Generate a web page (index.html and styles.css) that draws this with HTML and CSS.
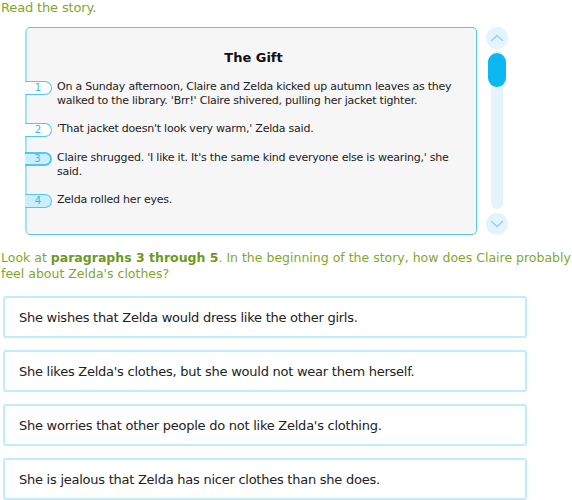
FILE: index.html
```html
<!DOCTYPE html>
<html>
<head>
<meta charset="utf-8">
<link rel="stylesheet" href="styles.css">
</head>
<body>
<div class="page">
  <div class="instr">Read the story.</div>
  <div class="story-row">
    <div class="story">
      <h1 class="title">The Gift</h1>
      <div class="para"><span class="num">1</span><p>On a Sunday afternoon, Claire and Zelda kicked up autumn leaves as they walked to the library. 'Brr!' Claire shivered, pulling her jacket tighter.</p></div>
      <div class="para"><span class="num">2</span><p>'That jacket doesn't look very warm,' Zelda said.</p></div>
      <div class="para"><span class="num num-active">3</span><p>Claire shrugged. 'I like it. It's the same kind everyone else is wearing,' she said.</p></div>
      <div class="para"><span class="num num-fill">4</span><p>Zelda rolled her eyes.</p></div>
    </div>
    <div class="scroll">
      <div class="btn"><svg width="14" height="8" viewBox="0 0 14 8"><path d="M1 7 L7 1.5 L13 7" fill="none" stroke="#8fd3f2" stroke-width="1.3"/></svg></div>
      <div class="track"><div class="thumb"></div></div>
      <div class="btn"><svg width="14" height="8" viewBox="0 0 14 8"><path d="M1 1 L7 6.5 L13 1" fill="none" stroke="#8fd3f2" stroke-width="1.3"/></svg></div>
    </div>
  </div>
  <div class="question">Look at <b>paragraphs 3 through 5</b>. In the beginning of the story, how does Claire probably feel about Zelda's clothes?</div>
  <div class="options">
    <div class="opt">She wishes that Zelda would dress like the other girls.</div>
    <div class="opt">She likes Zelda's clothes, but she would not wear them herself.</div>
    <div class="opt">She worries that other people do not like Zelda's clothing.</div>
    <div class="opt">She is jealous that Zelda has nicer clothes than she does.</div>
  </div>
</div>
</body>
</html>
```
FILE: styles.css
```css
html, body { margin: 0; padding: 0; background: #fff; }
body { font-family: "DejaVu Sans", Verdana, sans-serif; }
.page { width: 572px; }
.instr { color: #7fa82b; font-size: 13px; line-height: 16px; padding-left: 1px; height: 27px; letter-spacing: -0.15px; }
.story-row { display: flex; align-items: flex-start; padding-left: 25px; }
.story {
  width: 449px; height: 206px; box-sizing: content-box;
  background: #f6f6f6;
  border: 1px solid #55c6ee; border-left: 2px solid #a5e2f8;
  border-radius: 5px;
}
.title { margin: 22px 0 14px; text-align: center; font-size: 13px; line-height: 16px; font-weight: bold; color: #111; padding-left: 4px; }
.para { display: flex; align-items: flex-start; margin-bottom: 14px; }
.num {
  flex: none; width: 26px; height: 12px; margin-left: -2px; margin-top: 1px;
  border: 1px solid #55c6ee; border-left: none; border-radius: 0 7px 7px 0;
  background: #fff; color: #3bb8e8; font-size: 10px; line-height: 12px; text-align: center;
}
.num-active { border-width: 2px; height: 10px; line-height: 10px; width: 25px; background: #c9eefc; }
.num-fill { background: #c9eefc; }
.para p { margin: 0 0 0 5px; font-size: 11px; line-height: 14px; color: #222; width: 405px; letter-spacing: -0.22px; }
.scroll { display: flex; flex-direction: column; align-items: center; width: 24px; margin-left: 8px; }
.btn { width: 22px; height: 22px; border-radius: 50%; background: #e3f4fc; display: flex; align-items: center; justify-content: center; }
.track { position: relative; width: 12px; height: 158px; margin: 2px 0 4px; background: #e3f4fc; border-radius: 6px; }
.thumb { position: absolute; left: -3px; top: 2px; width: 18px; height: 34px; border-radius: 9px; background: #0bb8f2; }
.question { margin-top: 15px; color: #7fa82b; font-size: 12.5px; line-height: 16px; padding-left: 1px; width: 571px; }
.question b { color: #6b9a1e; }
.options { display: flex; flex-direction: column; gap: 12px; margin-top: 14px; padding-left: 3px; }
.opt {
  border: 2px solid #bfedfc; border-radius: 3px;
  display: flex; align-items: center; padding-left: 14px; box-sizing: border-box; height: 42px; width: 524px;
  font-size: 13px; color: #222; letter-spacing: -0.25px;
}
```
